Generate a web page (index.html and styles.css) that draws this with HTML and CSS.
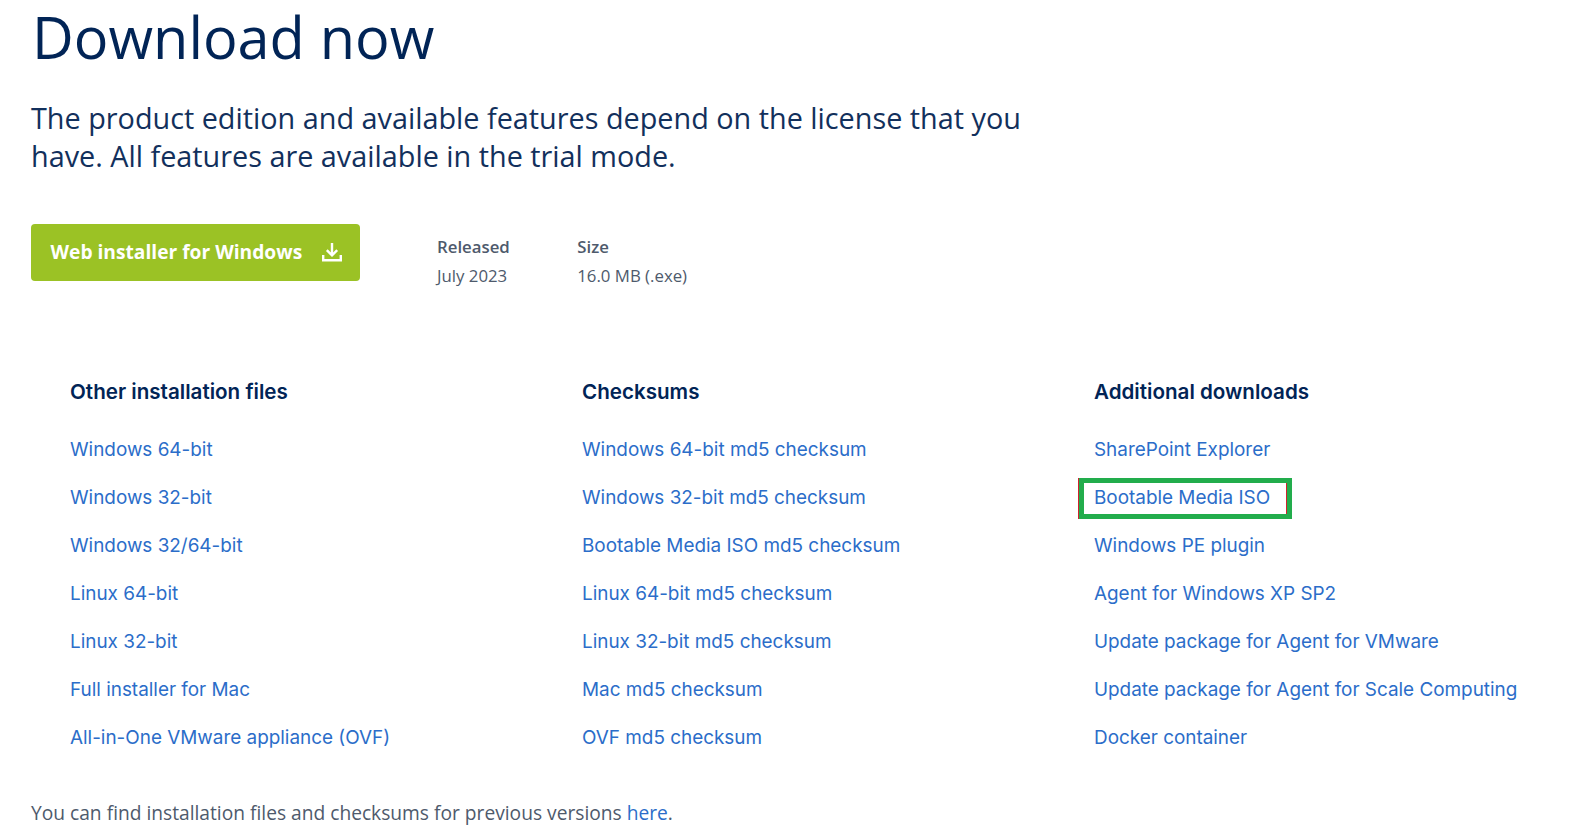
FILE: index.html
```html
<!DOCTYPE html>
<html lang="en">
<head>
    <meta charset="UTF-8">
    <meta name="viewport" content="width=device-width, initial-scale=1.0">
    <title>Download now</title>
    <link rel="stylesheet" href="styles.css">
</head>
<body>
    <h1 class="title">Download now</h1>
    <p class="lead">The product edition and available features depend on the license that you have. All features are available in the trial mode.</p>

    <div class="main-download">
        <a class="btn" href="#">
            Web installer for Windows
            <svg class="btn-icon" width="20" height="20" viewBox="0 0 20 20" fill="none" stroke="#fff" stroke-width="2.4">
                <path d="M10 1v12M4.8 8.2 10 13.4l5.2-5.2"/>
                <path d="M1.2 13v5.3h17.6V13"/>
            </svg>
        </a>
        <dl class="meta">
            <dt>Released</dt>
            <dd>July 2023</dd>
        </dl>
        <dl class="meta">
            <dt>Size</dt>
            <dd>16.0 MB (.exe)</dd>
        </dl>
    </div>

    <div class="columns">
        <div class="column">
            <h3>Other installation files</h3>
            <ul>
                <li><a href="#">Windows 64-bit</a></li>
                <li><a href="#">Windows 32-bit</a></li>
                <li><a href="#">Windows 32/64-bit</a></li>
                <li><a href="#">Linux 64-bit</a></li>
                <li><a href="#">Linux 32-bit</a></li>
                <li><a href="#">Full installer for Mac</a></li>
                <li><a href="#">All-in-One VMware appliance (OVF)</a></li>
            </ul>
        </div>
        <div class="column">
            <h3>Checksums</h3>
            <ul>
                <li><a href="#">Windows 64-bit md5 checksum</a></li>
                <li><a href="#">Windows 32-bit md5 checksum</a></li>
                <li><a href="#">Bootable Media ISO md5 checksum</a></li>
                <li><a href="#">Linux 64-bit md5 checksum</a></li>
                <li><a href="#">Linux 32-bit md5 checksum</a></li>
                <li><a href="#">Mac md5 checksum</a></li>
                <li><a href="#">OVF md5 checksum</a></li>
            </ul>
        </div>
        <div class="column">
            <h3>Additional downloads</h3>
            <ul>
                <li><a href="#">SharePoint Explorer</a></li>
                <li><a class="marked" href="#">Bootable Media ISO</a></li>
                <li><a href="#">Windows PE plugin</a></li>
                <li><a href="#">Agent for Windows XP SP2</a></li>
                <li><a href="#">Update package for Agent for VMware</a></li>
                <li><a href="#">Update package for Agent for Scale Computing</a></li>
                <li><a href="#">Docker container</a></li>
            </ul>
        </div>
    </div>

    <p class="previous">You can find installation files and checksums for previous versions <a href="#">here</a>.</p>
</body>
</html>
```

FILE: styles.css
```css
body {
    margin: 0;
    padding: 0 0 0 31px;
    height: 832px;
    overflow: hidden;
    box-sizing: border-box;
    background: #fff;
    font-family: "Open Sans", sans-serif;
    color: #012456;
}
.title {
    margin: -1px 0 0 1px;
    font-size: 57.6px;
    font-weight: 400;
    line-height: 76px;
}
.lead {
    width: 1020px;
    margin: 24px 0 0;
    font-size: 28.8px;
    line-height: 38px;
    color: #12305c;
}
.main-download {
    display: flex;
    align-items: flex-start;
    margin-top: 49px;
}
.btn {
    display: flex;
    align-items: center;
    justify-content: space-between;
    box-sizing: border-box;
    width: 329px;
    height: 57px;
    padding: 0 18px 2px 19.5px;
    border-radius: 4px;
    background: #9bc225;
    color: #fff;
    font-size: 19.2px;
    font-weight: 700;
    text-decoration: none;
}
.meta {
    margin: 8px 0 0 77px;
    font-size: 16.8px;
    line-height: 29px;
    color: #4e5a6c;
}
.meta + .meta {
    margin-left: 67.5px;
}
.meta dt {
    font-weight: 600;
}
.meta dd {
    margin: 0;
}
.columns {
    display: flex;
    margin: 88px 0 0 39px;
}
.column {
    flex: none;
    width: 512px;
    font-family: Inter, sans-serif;
}
.column h3 {
    margin: 0;
    font-size: 20.6px;
    font-weight: 600;
    line-height: 28px;
    color: #012456;
}
.column ul {
    margin: 29.5px 0 0;
    padding: 0;
    list-style: none;
}
.column li {
    height: 48.14px;
    font-size: 18.9px;
    line-height: 28px;
}
.column a {
    color: #2b6dc9;
    text-decoration: none;
}
.column .marked {
    display: inline-block;
    margin: -6px 0 0 -15px;
    padding: 1px 16.4px 2px 10px;
    border: 5px solid #22ad4c;
    box-shadow: -1px 0 0 #d0222d, inset -1px 0 0 #d0222d;
}
.previous {
    margin: 26.8px 0 0;
    font-size: 19.2px;
    line-height: 28px;
    color: #4e5a6c;
}
.previous a {
    color: #2b6dc9;
    text-decoration: none;
}
```
